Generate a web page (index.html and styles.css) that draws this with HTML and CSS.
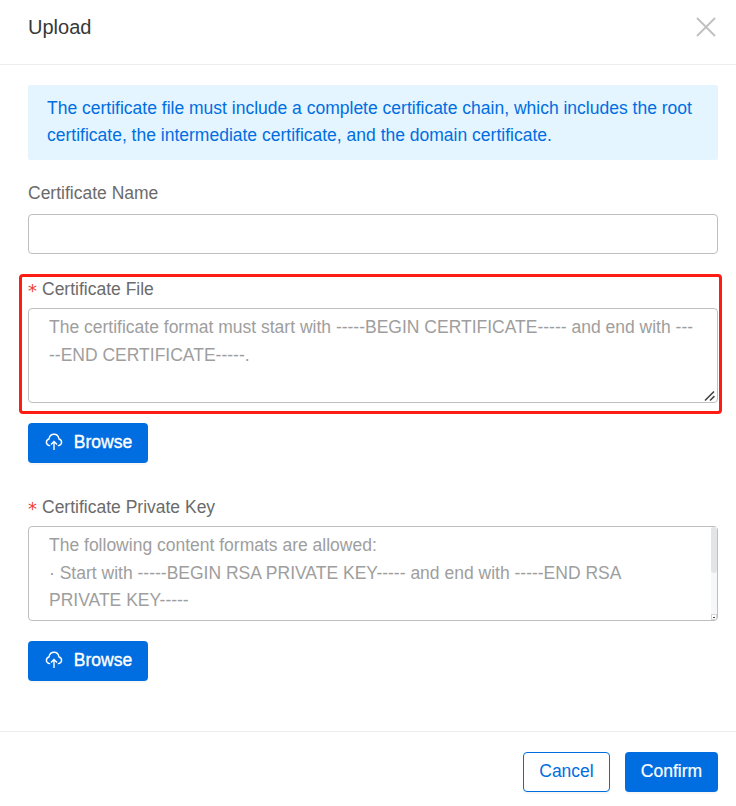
FILE: index.html
```
<!DOCTYPE html>
<html lang="en">
<head>
<meta charset="utf-8">
<title>Upload</title>
<link rel="stylesheet" href="styles.css">
</head>
<body>
<svg class="defs" width="0" height="0"><defs>
<symbol id="cloud" viewBox="0 0 18 18"><path d="M5.2 12.6H4.4C2.5 12.2 1.4 11 1.4 9.3 1.4 7.6 2.4 6.4 4 6 4.5 3 6.4 1.2 9 1.2s4.5 1.8 5 4.8c1.6.4 2.6 1.6 2.6 3.3 0 1.7-1.1 2.9-3 3.3h-.8M9 17V8.8M6 11.4l3-3 3 3"/></symbol>
</defs></svg>
<div class="dialog">
  <header class="head">
    <h1 class="title">Upload</h1>
    <svg class="close" viewBox="0 0 20 20"><path d="M1 1l18 18M19 1L1 19"/></svg>
  </header>
  <main class="body">
    <div class="alert">The certificate file must include a complete certificate chain, which includes the root<br>certificate, the intermediate certificate, and the domain certificate.</div>
    <div class="label">Certificate Name</div>
    <div class="input"></div>
    <section class="highlight">
      <div class="label required"><span class="star">*</span>Certificate File</div>
      <div class="area">The certificate format must start with -----BEGIN CERTIFICATE----- and end with ---<br>--END CERTIFICATE-----.
        <svg class="grip" viewBox="0 0 12 12"><path d="M1 10.5L10 1.5M6 10.5L10.4 6.1"/></svg>
      </div>
    </section>
    <button class="btn browse"><svg class="cloud"><use href="#cloud"/></svg>Browse</button>
    <section class="private">
      <div class="label required"><span class="star">*</span>Certificate Private Key</div>
      <div class="area">The following content formats are allowed:<br>· Start with -----BEGIN RSA PRIVATE KEY----- and end with -----END RSA<br>PRIVATE KEY-----
        <div class="track"><div class="thumb"></div><div class="arrow"></div></div>
      </div>
    </section>
    <button class="btn browse"><svg class="cloud"><use href="#cloud"/></svg>Browse</button>
  </main>
  <footer class="foot">
    <button class="btn cancel">Cancel</button>
    <button class="btn confirm">Confirm</button>
  </footer>
</div>
</body>
</html>
```
FILE: styles.css
```
* { box-sizing: border-box; }
body { margin: 0; background: #fff; font: 17.5px/27.5px "Liberation Sans", Arial, sans-serif; color: #6b6b6b; }
.defs { display: block; }
.dialog { display: flex; flex-direction: column; width: 736px; height: 806px; overflow: hidden; }
.head { display: flex; justify-content: space-between; height: 65px; padding: 13px 20.5px 0 28px; border-bottom: 1px solid #ededed; }
.title { margin: 0; font-size: 20px; line-height: 28px; font-weight: 400; color: #383838; }
.close { width: 20px; height: 20px; margin-top: 3.5px; fill: none; stroke: #c0c0c0; stroke-width: 1.9; }
.body { height: 666px; padding: 20px 18px 0 28px; }
.alert { height: 75px; padding: 10px 19px; margin-bottom: 19px; border-radius: 2px; background: #e4f5ff; color: #006ee1; line-height: 27px; white-space: nowrap; }
.label { height: 28px; line-height: 28px; }
.input { height: 40px; margin-top: 7px; border: 1px solid #bfbfbf; border-radius: 4px; }
.highlight { height: 140px; margin: 20px -4px 9px -9px; padding: 0 1px 0 6px; border: 3px solid #ff1c12; border-radius: 4px; }
.required { display: flex; margin-top: -2px; }
.star { width: 14px; color: #f04134; font-family: "DejaVu Sans", sans-serif; font-size: 18px; line-height: 31px; }
.area { position: relative; height: 95px; margin-top: 5px; padding: 5px 20px; border: 1px solid #bfbfbf; border-radius: 4px; color: #9e9e9e; white-space: nowrap; }
.grip { position: absolute; right: 1px; bottom: 0; width: 12px; height: 12px; fill: none; stroke: #444; stroke-width: 1.6; }
.btn { display: flex; align-items: center; justify-content: center; height: 40px; padding: 0; border: 0; border-radius: 4px; background: #006ee1; color: #fff; font: inherit; box-shadow: 0 2px 0 rgba(0, 0, 0, .03); }
.browse { width: 120px; gap: 11px; padding-left: 1px; -webkit-text-stroke: .35px #fff; }
.cloud { width: 18px; height: 18px; margin-top: -3px; fill: none; stroke: #fff; stroke-width: 1.4; }
.private { margin: 32px 0 20px; }
.track { position: absolute; top: 0; right: 0; width: 6px; height: 93px; background: #f5f7fa; }
.thumb { height: 46px; border-radius: 3px; background: #e3e4e6; }
.arrow { position: absolute; bottom: 0; width: 6px; height: 6px; border: 1px solid #d5d5d5; background: #fff; }
.arrow::after { content: ""; display: block; width: 2px; height: 1px; margin: 2px 1px; background: #444; }
.foot { display: flex; justify-content: flex-end; gap: 15px; height: 75px; padding: 20px 18px 0; border-top: 1px solid #ededed; }
.cancel { width: 87px; border: 1px solid #006ee1; background: #fff; color: #006ee1; }
.confirm { width: 93px; -webkit-text-stroke: .2px #fff; }
```
